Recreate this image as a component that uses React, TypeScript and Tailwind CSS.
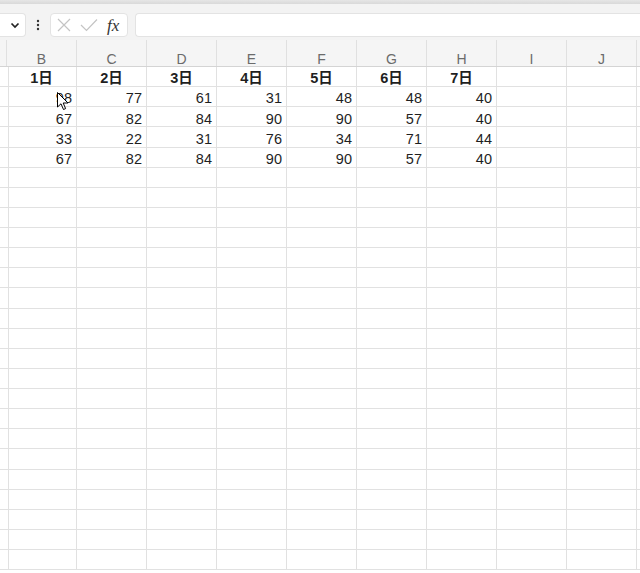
import React from 'react';

const cols = ['B', 'C', 'D', 'E', 'F', 'G', 'H', 'I', 'J'];
const days = ['1日', '2日', '3日', '4日', '5日', '6日', '7日'];
const data = [
  [98, 77, 61, 31, 48, 48, 40],
  [67, 82, 84, 90, 90, 57, 40],
  [33, 22, 31, 76, 34, 71, 44],
  [67, 82, 84, 90, 90, 57, 40],
];
const ROWS = 25;

const font = { fontFamily: '"Liberation Sans", "Noto Sans CJK SC", sans-serif' };

const Cell: React.FC<{ children?: React.ReactNode; align?: 'right' | 'center'; bold?: boolean }> = ({
  children,
  align = 'right',
  bold,
}) => (
  <div
    className={`h-[20.14px] border-r border-b border-[#e1e1e1] flex items-center px-[4px] pt-[4px] text-[14.5px] leading-none text-[#1f1f1f] ${
      align === 'center' ? 'justify-center' : 'justify-end'
    } ${bold ? 'font-bold' : ''}`}
  >
    {children}
  </div>
);

export default function App() {
  const rows = Array.from({ length: ROWS }, (_, r) => r);

  return (
    <div className="relative h-[573px] w-[640px] overflow-hidden bg-white" style={font}>
      {/* window top edge */}
      <div className="h-[4px] bg-gradient-to-b from-[#e6e6e6] to-[#d9d9d9]" />

      {/* formula bar */}
      <div className="flex h-[36px] items-start bg-[#f3f3f3] pt-[9px]">
        <div className="flex h-[24px] w-[26px] items-center justify-end rounded-r-[4px] border border-l-0 border-[#e3e3e3] bg-white pr-[5px]">
          <svg width="10" height="7" viewBox="0 0 10 7">
            <path d="M1.5 1.5 L5 5 L8.5 1.5" fill="none" stroke="#222" strokeWidth="1.7" />
          </svg>
        </div>
        <div className="flex h-[24px] w-[24px] items-center justify-center">
          <svg width="4" height="12" viewBox="0 0 4 12">
            <circle cx="2" cy="2" r="1.2" fill="#333" />
            <circle cx="2" cy="6" r="1.2" fill="#333" />
            <circle cx="2" cy="10" r="1.2" fill="#333" />
          </svg>
        </div>
        <div className="flex h-[24px] w-[78px] items-center rounded-[4px] border border-[#e3e3e3] bg-white pl-[6px]">
          <svg width="14" height="14" viewBox="0 0 14 14">
            <path d="M1 1 L13 13 M13 1 L1 13" stroke="#c4c4c4" strokeWidth="1.2" fill="none" />
          </svg>
          <svg className="ml-[9px]" width="18" height="14" viewBox="0 0 18 14">
            <path d="M1 7 L6.5 12.5 L17 1.5" stroke="#c4c4c4" strokeWidth="1.2" fill="none" />
          </svg>
          <span
            className="ml-[9px] text-[17px] italic leading-none text-[#333]"
            style={{ fontFamily: '"Liberation Serif", serif' }}
          >
            fx
          </span>
        </div>
        <div className="ml-[7px] h-[24px] flex-1 rounded-l-[4px] border border-r-0 border-[#e3e3e3] bg-white" />
      </div>

      {/* column headers */}
      <div className="grid h-[27px] grid-cols-[7px_repeat(9,70px)_1fr] border-b border-[#d4d4d4] bg-[#f5f5f5]">
        <div className="border-r border-[#e0e0e0]" />
        {cols.map((c) => (
          <div
            key={c}
            className="flex items-center justify-center border-r border-[#e0e0e0] pt-[11px] text-[14px] leading-none text-[#6b6b6b]"
          >
            {c}
          </div>
        ))}
        <div />
      </div>

      {/* sheet body */}
      <div className="grid grid-cols-[7px_repeat(9,70px)_1fr]">
        {rows.map((r) => (
          <React.Fragment key={r}>
            <Cell />
            {cols.map((c, ci) => {
              if (r === 0) {
                return (
                  <Cell key={c} align="center" bold>
                    {days[ci] ?? ''}
                  </Cell>
                );
              }
              const v = r <= data.length ? data[r - 1][ci] : undefined;
              return <Cell key={c}>{v ?? ''}</Cell>;
            })}
            <div className="h-[20.14px] border-b border-[#e1e1e1]" />
          </React.Fragment>
        ))}
      </div>

      {/* mouse pointer */}
      <svg className="absolute left-[57px] top-[92px]" width="12" height="19" viewBox="0 0 12 19">
        <path
          d="M0.5 0.5 L0.5 15 L4 11.8 L6.5 17.5 L8.6 16.6 L6.2 11 L11 11 Z"
          fill="#fff"
          stroke="#000"
          strokeWidth="1"
          strokeLinejoin="round"
        />
      </svg>
    </div>
  );
}
